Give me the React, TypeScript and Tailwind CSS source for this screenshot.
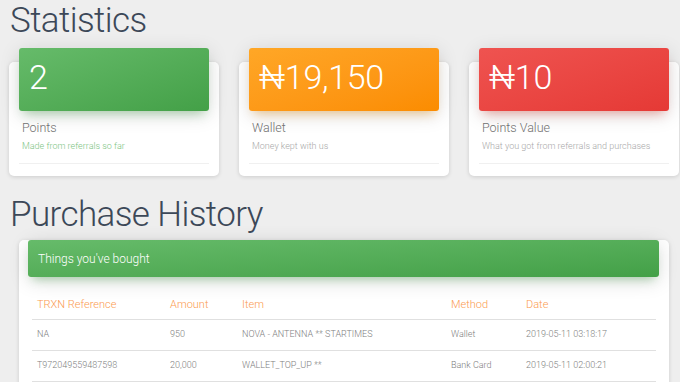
const stats = [
  {
    value: "2",
    title: "Points",
    note: "Made from referrals so far",
    noteClass: "text-[#7cc47f]",
    header: "bg-gradient-to-br from-[#66bb6a] to-[#43a047] shadow-[0_4px_20px_0_rgba(0,0,0,0.14),0_7px_10px_-5px_rgba(76,175,80,0.4)]",
  },
  {
    value: "₦19,150",
    title: "Wallet",
    note: "Money kept with us",
    noteClass: "text-[#a8a8a8]",
    header: "bg-gradient-to-br from-[#ffa726] to-[#fb8c00] shadow-[0_4px_20px_0_rgba(0,0,0,0.14),0_7px_10px_-5px_rgba(255,152,0,0.4)]",
  },
  {
    value: "₦10",
    title: "Points Value",
    note: "What you got from referrals and purchases",
    noteClass: "text-[#a8a8a8]",
    header: "bg-gradient-to-br from-[#ef5350] to-[#e53935] shadow-[0_4px_20px_0_rgba(0,0,0,0.14),0_7px_10px_-5px_rgba(244,67,54,0.4)]",
  },
];

const purchases = [
  { ref: "NA", amount: "950", item: "NOVA - ANTENNA ** STARTIMES", method: "Wallet", date: "2019-05-11 03:18:17" },
  { ref: "T972049559487598", amount: "20,000", item: "WALLET_TOP_UP **", method: "Bank Card", date: "2019-05-11 02:00:21" },
];

const cols = "grid grid-cols-[133px_72px_209px_75px_135px]";

function StatCard({ stat }: { stat: (typeof stats)[number] }) {
  return (
    <div className="bg-white rounded-[5px] shadow-[0_1px_4px_0_rgba(0,0,0,0.14)]">
      {/* Coloured header */}
      <div className={`-mt-[14px] mx-[10px] h-[63px] rounded-[3px] pl-[10px] pt-[12px] ${stat.header}`}>
        <span className="block text-white text-[34px] tracking-[-0.3px] font-light leading-none">{stat.value}</span>
      </div>

      <div className="px-[13px] pt-[7px] whitespace-nowrap">
        <div className="text-[12.5px] leading-[20px] font-light text-[#707070]">{stat.title}</div>
        <div className={`mt-[1px] text-[9px] leading-[14px] font-light ${stat.noteClass}`}>{stat.note}</div>
      </div>
      <div className="mx-[10px] mt-[10px] border-t border-[#f0f0f0]" />
      <div className="h-[12px]" />
    </div>
  );
}

export default function App() {
  return (
    <div className="h-[382px] overflow-hidden bg-[#eeeeee] font-['Roboto',sans-serif]">
      <h3 className="pl-[10px] pt-[3px] text-[35px] tracking-[-0.6px] font-light leading-none text-[#3c4858]">Statistics</h3>

      {/* Stats */}
      <div className="mt-[24px] pl-[9px] pr-[1px] grid grid-cols-3 gap-[20px]">
        {stats.map((s) => (
          <StatCard key={s.title} stat={s} />
        ))}
      </div>

      <h3 className="mt-[21px] pl-[10px] text-[35px] tracking-[-0.6px] font-light leading-none text-[#3c4858]">Purchase History</h3>

      {/* Purchases */}
      <div className="mt-[21px] ml-[19px] w-[650px] bg-white rounded-[5px] shadow-[0_1px_4px_0_rgba(0,0,0,0.14)] pb-4">
        <div className="-mt-[13px] ml-[9px] mr-[10px] h-[37px] rounded-[3px] bg-gradient-to-br from-[#66bb6a] to-[#43a047] shadow-[0_4px_20px_0_rgba(0,0,0,0.14),0_7px_10px_-5px_rgba(76,175,80,0.4)] pl-[10px] flex items-center">
          <span className="text-white text-[12px] font-light">Things you've bought</span>
        </div>

        <div className="mt-[15px] ml-[13px] mr-[13px]">
          <div className={`${cols} h-[28px] items-center text-[11px] text-[#fb9a4f] font-light border-b border-[#e0e0e0]`}>
            <span className="pl-[5px]">TRXN Reference</span>
            <span className="pl-[5px]">Amount</span>
            <span className="pl-[5px]">Item</span>
            <span className="pl-[5px]">Method</span>
            <span className="pl-[5px]">Date</span>
          </div>
          {purchases.map((p, i) => (
            <div key={i} className={`${cols} h-[31px] items-center text-[9px] text-[#808080] font-light border-b border-[#e0e0e0]`}>
              <span className="pl-[5px]">{p.ref}</span>
              <span className="pl-[5px]">{p.amount}</span>
              <span className="pl-[5px]">{p.item}</span>
              <span className="pl-[5px]">{p.method}</span>
              <span className="pl-[5px]">{p.date}</span>
            </div>
          ))}
        </div>
      </div>
    </div>
  );
}
